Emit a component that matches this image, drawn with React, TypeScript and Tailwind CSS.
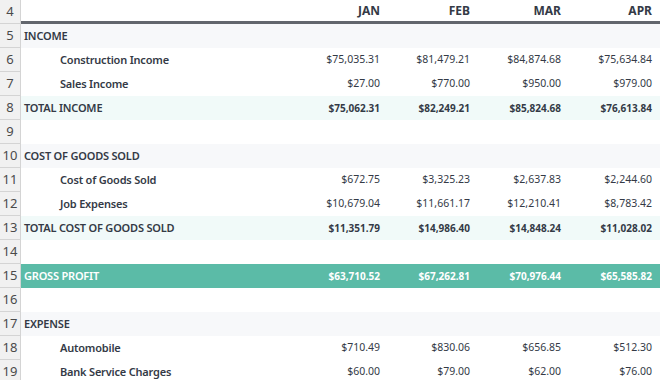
import React from 'react'

type Row = {
  n: number
  label?: string
  kind?: 'section' | 'item' | 'total' | 'profit' | 'blank'
  values?: string[]
}

const rows: Row[] = [
  { n: 5, label: 'INCOME', kind: 'section' },
  { n: 6, label: 'Construction Income', kind: 'item', values: ['$75,035.31', '$81,479.21', '$84,874.68', '$75,634.84'] },
  { n: 7, label: 'Sales Income', kind: 'item', values: ['$27.00', '$770.00', '$950.00', '$979.00'] },
  { n: 8, label: 'TOTAL INCOME', kind: 'total', values: ['$75,062.31', '$82,249.21', '$85,824.68', '$76,613.84'] },
  { n: 9, kind: 'blank' },
  { n: 10, label: 'COST OF GOODS SOLD', kind: 'section' },
  { n: 11, label: 'Cost of Goods Sold', kind: 'item', values: ['$672.75', '$3,325.23', '$2,637.83', '$2,244.60'] },
  { n: 12, label: 'Job Expenses', kind: 'item', values: ['$10,679.04', '$11,661.17', '$12,210.41', '$8,783.42'] },
  { n: 13, label: 'TOTAL COST OF GOODS SOLD', kind: 'total', values: ['$11,351.79', '$14,986.40', '$14,848.24', '$11,028.02'] },
  { n: 14, kind: 'blank' },
  { n: 15, label: 'GROSS PROFIT', kind: 'profit', values: ['$63,710.52', '$67,262.81', '$70,976.44', '$65,585.82'] },
  { n: 16, kind: 'blank' },
  { n: 17, label: 'EXPENSE', kind: 'section' },
  { n: 18, label: 'Automobile', kind: 'item', values: ['$710.49', '$830.06', '$656.85', '$512.30'] },
  { n: 19, label: 'Bank Service Charges', kind: 'item', values: ['$60.00', '$79.00', '$62.00', '$76.00'] },
]

const months = ['JAN', 'FEB', 'MAR', 'APR']
const colW = ['w-[91px]', 'w-[90px]', 'w-[91px]', 'w-[91px]']

function RowNum({ n }: { n: number }) {
  return (
    <div className="w-[21px] shrink-0 h-full flex items-center justify-center bg-[#f1f1f1] border-r border-b border-[#d4d4d4] text-[13px] text-[#4a4a4a]">
      {n}
    </div>
  )
}

function SheetRow({ row }: { row: Row }) {
  const bg =
    row.kind === 'section'
      ? 'bg-[#f7f8fa]'
      : row.kind === 'total'
        ? 'bg-[#f1faf9]'
        : row.kind === 'profit'
          ? 'bg-[#5bbba7]'
          : 'bg-white'
  const text = row.kind === 'profit' ? 'text-white' : 'text-[#343a46]'
  const indent = row.kind === 'item' ? 'pl-[39px]' : 'pl-[3px]'
  // values: bold ones a touch smaller so they keep the same width
  const value = row.kind === 'item' ? 'font-normal text-[10.5px]' : 'font-bold text-[10px]'

  return (
    <div className="flex h-[24px]">
      <RowNum n={row.n} />
      <div className={`flex flex-1 items-center ${bg} ${text}`}>
        <div className={`w-[276px] shrink-0 font-semibold text-[11px] tracking-[-0.2px] ${indent}`}>{row.label}</div>
        {row.values?.map((v, i) => (
          <div key={i} className={`${colW[i]} shrink-0 text-right pr-2 ${value}`}>
            {v}
          </div>
        ))}
      </div>
    </div>
  )
}

export default function App() {
  return (
    <div className="w-[660px] h-[380px] overflow-hidden bg-white font-['Noto_Sans',sans-serif]">
      <div className="flex h-[24px]">
        <RowNum n={4} />
        <div className="flex flex-1 items-center border-b-[3px] border-[#62666d] text-[#343a46] text-[12px] font-bold">
          <div className="w-[276px] shrink-0" />
          {months.map((m, i) => (
            <div key={m} className={`${colW[i]} shrink-0 text-right pr-2`}>
              {m}
            </div>
          ))}
        </div>
      </div>
      {rows.map((r) => (
        <SheetRow key={r.n} row={r} />
      ))}
    </div>
  )
}
